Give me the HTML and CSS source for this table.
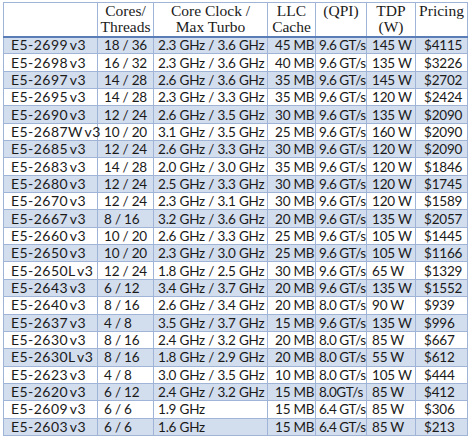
FILE: index.html
```html
<!DOCTYPE html>
<html>
<head>
<meta charset="utf-8">
<link rel="stylesheet" href="styles.css">
</head>
<body>
<table class="spec">
  <thead>
    <tr>
      <th class="h-name"></th>
      <th class="h-cores">Cores/<br>Threads</th>
      <th class="h-clock">Core Clock /<br>Max Turbo</th>
      <th class="h-llc">LLC<br>Cache</th>
      <th class="h-qpi">(QPI)</th>
      <th class="h-tdp">TDP<br>(W)</th>
      <th class="h-price">Pricing</th>
    </tr>
  </thead>
  <tbody>
    <tr class="alt"><td class="name">E5-2699 v3</td><td class="cores">18 / 36</td><td class="clock">2.3 GHz / 3.6 GHz</td><td class="llc">45 MB</td><td class="qpi">9.6 GT/s</td><td class="tdp">145 W</td><td class="price">$4115</td></tr>
    <tr><td class="name">E5-2698 v3</td><td class="cores">16 / 32</td><td class="clock">2.3 GHz / 3.6 GHz</td><td class="llc">40 MB</td><td class="qpi">9.6 GT/s</td><td class="tdp">135 W</td><td class="price">$3226</td></tr>
    <tr class="alt"><td class="name">E5-2697 v3</td><td class="cores">14 / 28</td><td class="clock">2.6 GHz / 3.6 GHz</td><td class="llc">35 MB</td><td class="qpi">9.6 GT/s</td><td class="tdp">145 W</td><td class="price">$2702</td></tr>
    <tr><td class="name">E5-2695 v3</td><td class="cores">14 / 28</td><td class="clock">2.3 GHz / 3.3 GHz</td><td class="llc">35 MB</td><td class="qpi">9.6 GT/s</td><td class="tdp">120 W</td><td class="price">$2424</td></tr>
    <tr class="alt"><td class="name">E5-2690 v3</td><td class="cores">12 / 24</td><td class="clock">2.6 GHz / 3.5 GHz</td><td class="llc">30 MB</td><td class="qpi">9.6 GT/s</td><td class="tdp">135 W</td><td class="price">$2090</td></tr>
    <tr><td class="name">E5-2687W v3</td><td class="cores">10 / 20</td><td class="clock">3.1 GHz / 3.5 GHz</td><td class="llc">25 MB</td><td class="qpi">9.6 GT/s</td><td class="tdp">160 W</td><td class="price">$2090</td></tr>
    <tr class="alt"><td class="name">E5-2685 v3</td><td class="cores">12 / 24</td><td class="clock">2.6 GHz / 3.3 GHz</td><td class="llc">30 MB</td><td class="qpi">9.6 GT/s</td><td class="tdp">120 W</td><td class="price">$2090</td></tr>
    <tr><td class="name">E5-2683 v3</td><td class="cores">14 / 28</td><td class="clock">2.0 GHz / 3.0 GHz</td><td class="llc">35 MB</td><td class="qpi">9.6 GT/s</td><td class="tdp">120 W</td><td class="price">$1846</td></tr>
    <tr class="alt"><td class="name">E5-2680 v3</td><td class="cores">12 / 24</td><td class="clock">2.5 GHz / 3.3 GHz</td><td class="llc">30 MB</td><td class="qpi">9.6 GT/s</td><td class="tdp">120 W</td><td class="price">$1745</td></tr>
    <tr><td class="name">E5-2670 v3</td><td class="cores">12 / 24</td><td class="clock">2.3 GHz / 3.1 GHz</td><td class="llc">30 MB</td><td class="qpi">9.6 GT/s</td><td class="tdp">120 W</td><td class="price">$1589</td></tr>
    <tr class="alt"><td class="name">E5-2667 v3</td><td class="cores">8 / 16</td><td class="clock">3.2 GHz / 3.6 GHz</td><td class="llc">20 MB</td><td class="qpi">9.6 GT/s</td><td class="tdp">135 W</td><td class="price">$2057</td></tr>
    <tr><td class="name">E5-2660 v3</td><td class="cores">10 / 20</td><td class="clock">2.6 GHz / 3.3 GHz</td><td class="llc">25 MB</td><td class="qpi">9.6 GT/s</td><td class="tdp">105 W</td><td class="price">$1445</td></tr>
    <tr class="alt"><td class="name">E5-2650 v3</td><td class="cores">10 / 20</td><td class="clock">2.3 GHz / 3.0 GHz</td><td class="llc">25 MB</td><td class="qpi">9.6 GT/s</td><td class="tdp">105 W</td><td class="price">$1166</td></tr>
    <tr><td class="name">E5-2650L v3</td><td class="cores">12 / 24</td><td class="clock">1.8 GHz / 2.5 GHz</td><td class="llc">30 MB</td><td class="qpi">9.6 GT/s</td><td class="tdp">65 W</td><td class="price">$1329</td></tr>
    <tr class="alt"><td class="name">E5-2643 v3</td><td class="cores">6 / 12</td><td class="clock">3.4 GHz / 3.7 GHz</td><td class="llc">20 MB</td><td class="qpi">9.6 GT/s</td><td class="tdp">135 W</td><td class="price">$1552</td></tr>
    <tr><td class="name">E5-2640 v3</td><td class="cores">8 / 16</td><td class="clock">2.6 GHz / 3.4 GHz</td><td class="llc">20 MB</td><td class="qpi">8.0 GT/s</td><td class="tdp">90 W</td><td class="price">$939</td></tr>
    <tr class="alt"><td class="name">E5-2637 v3</td><td class="cores">4 / 8</td><td class="clock">3.5 GHz / 3.7 GHz</td><td class="llc">15 MB</td><td class="qpi">9.6 GT/s</td><td class="tdp">135 W</td><td class="price">$996</td></tr>
    <tr><td class="name">E5-2630 v3</td><td class="cores">8 / 16</td><td class="clock">2.4 GHz / 3.2 GHz</td><td class="llc">20 MB</td><td class="qpi">8.0 GT/s</td><td class="tdp">85 W</td><td class="price">$667</td></tr>
    <tr class="alt"><td class="name">E5-2630L v3</td><td class="cores">8 / 16</td><td class="clock">1.8 GHz / 2.9 GHz</td><td class="llc">20 MB</td><td class="qpi">8.0 GT/s</td><td class="tdp">55 W</td><td class="price">$612</td></tr>
    <tr><td class="name">E5-2623 v3</td><td class="cores">4 / 8</td><td class="clock">3.0 GHz / 3.5 GHz</td><td class="llc">10 MB</td><td class="qpi">8.0 GT/s</td><td class="tdp">105 W</td><td class="price">$444</td></tr>
    <tr class="alt"><td class="name">E5-2620 v3</td><td class="cores">6 / 12</td><td class="clock">2.4 GHz / 3.2 GHz</td><td class="llc">15 MB</td><td class="qpi">8.0GT/s</td><td class="tdp">85 W</td><td class="price">$412</td></tr>
    <tr><td class="name">E5-2609 v3</td><td class="cores">6 / 6</td><td class="clock">1.9 GHz</td><td class="llc">15 MB</td><td class="qpi">6.4 GT/s</td><td class="tdp">85 W</td><td class="price">$306</td></tr>
    <tr class="alt"><td class="name">E5-2603 v3</td><td class="cores">6 / 6</td><td class="clock">1.6 GHz</td><td class="llc">15 MB</td><td class="qpi">6.4 GT/s</td><td class="tdp">85 W</td><td class="price">$213</td></tr>
  </tbody>
</table>
</body>
</html>
```

FILE: styles.css
```css
html, body {
  margin: 0;
  padding: 0;
  background: #ffffff;
}

.spec {
  margin: 2px 0 0 3px;
  border-collapse: collapse;
  table-layout: fixed;
  width: 464px;
  border: 1px solid #7d98c3;
  font-family: "Lato", "Liberation Sans", sans-serif;
  font-size: 13.5px;
  letter-spacing: -0.2px;
  color: #1a1a1a;
}

.spec th {
  box-sizing: border-box;
}

.h-name { width: 94px; }
.h-cores { width: 56px; }
.h-clock { width: 114px; }
.h-llc { width: 48px; }
.h-qpi { width: 51px; }
.h-tdp { width: 49px; }
.h-price { width: 52px; }

.spec thead tr {
  height: 34px;
}

.spec th {
  font-family: "Liberation Serif", "DejaVu Serif", serif;
  font-weight: normal;
  font-size: 15.5px;
  letter-spacing: 0;
  line-height: 16px;
  padding: 0;
  vertical-align: top;
  text-align: center;
  border: 1px solid #9fb4d6;
  border-bottom: 2px solid #5b7db7;
  white-space: nowrap;
}

.spec tbody tr {
  height: 17.35px;
}

.spec td {
  padding: 0;
  line-height: 14px;
  border: 1px solid #9fb4d6;
  white-space: nowrap;
  vertical-align: middle;
}

.spec tr.alt td {
  background: #d2ddee;
}

.spec .name { padding-left: 7px; font-size: 14px; letter-spacing: 0.45px; word-spacing: -2px; }
.spec .cores { padding-left: 6px; }
.spec .clock { padding-left: 4px; }
.spec .llc { padding-left: 7px; }
.spec .qpi { padding-left: 3px; letter-spacing: -0.5px; }
.spec .tdp { padding-left: 5px; }
.spec .price { padding-left: 8px; }
```
